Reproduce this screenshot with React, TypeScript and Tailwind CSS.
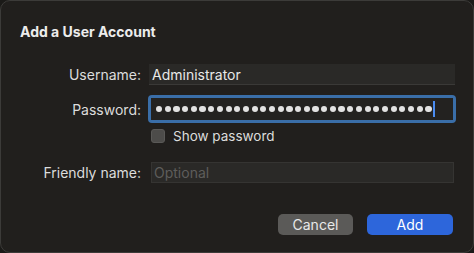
const dots = Array.from({ length: 32 });

export default function App() {
  return (
    <div className="w-[474px] h-[253px] bg-[#1b1a18] overflow-hidden" style={{ fontFamily: "Inter, 'Liberation Sans', sans-serif" }}>
      <div className="w-full h-full rounded-[10px] border border-[#3c3b39] bg-[#211f1d] text-[#e6e6e6] pt-[22px]">
        <h1 className="pl-[19px] text-[14px] leading-[18px] font-bold text-[#ececec]">Add a User Account</h1>

        <div className="mt-[23px] flex items-center h-[21px]">
          <label className="w-[140px] text-right text-[14px] text-[#dcdcdc]">Username:</label>
          <div className="ml-[8px] w-[306px] h-[21px] bg-[#2a2927] border-b border-[#3a3937] flex items-center px-[3px] text-[14px] text-[#e8e8e8]">
            Administrator
          </div>
        </div>

        <div className="mt-[10px] flex items-center h-[28px]">
          <label className="w-[140px] text-right text-[14px] text-[#dcdcdc]">Password:</label>
          <div className="ml-[7px] w-[308px] h-[28px] rounded-[4px] bg-[#3a6ea8] p-[3px]">
            <div className="w-full h-full bg-[#232220] flex items-center pl-[5px] gap-[2.5px]">
              {dots.map((_, i) => (
                <span key={i} className="w-[6.2px] h-[6.2px] rounded-full bg-[#e2e2e2] shrink-0" />
              ))}
              <span className="w-[1.5px] h-[16px] bg-[#4a8cf0] -ml-[1px]" />
            </div>
          </div>
        </div>

        <div className="mt-[6px] flex items-center h-[14px] pl-[150px]">
          <span className="w-[14px] h-[14px] rounded-[3px] bg-[#4d4c4a] border border-[#5a5957]" />
          <span className="ml-[8px] text-[13.5px] text-[#dcdcdc]">Show password</span>
        </div>

        <div className="mt-[19px] flex items-center h-[21px]">
          <label className="w-[140px] text-right text-[14px] text-[#dcdcdc]">Friendly name:</label>
          <div className="ml-[10px] w-[303px] h-[21px] bg-[#2a2927] border border-[#353432] flex items-center px-[2px] text-[14px] text-[#5e5d5b]">
            Optional
          </div>
        </div>

        <div className="mt-[31px] flex justify-end pr-[20px] gap-[14px]">
          <button className="w-[75px] h-[21px] rounded-[5px] bg-[#5b5a58] text-[14px] text-[#e8e8e8] leading-none">Cancel</button>
          <button className="w-[86px] h-[21px] rounded-[5px] bg-[#2d66db] text-[14px] text-white leading-none">Add</button>
        </div>
      </div>
    </div>
  );
}
